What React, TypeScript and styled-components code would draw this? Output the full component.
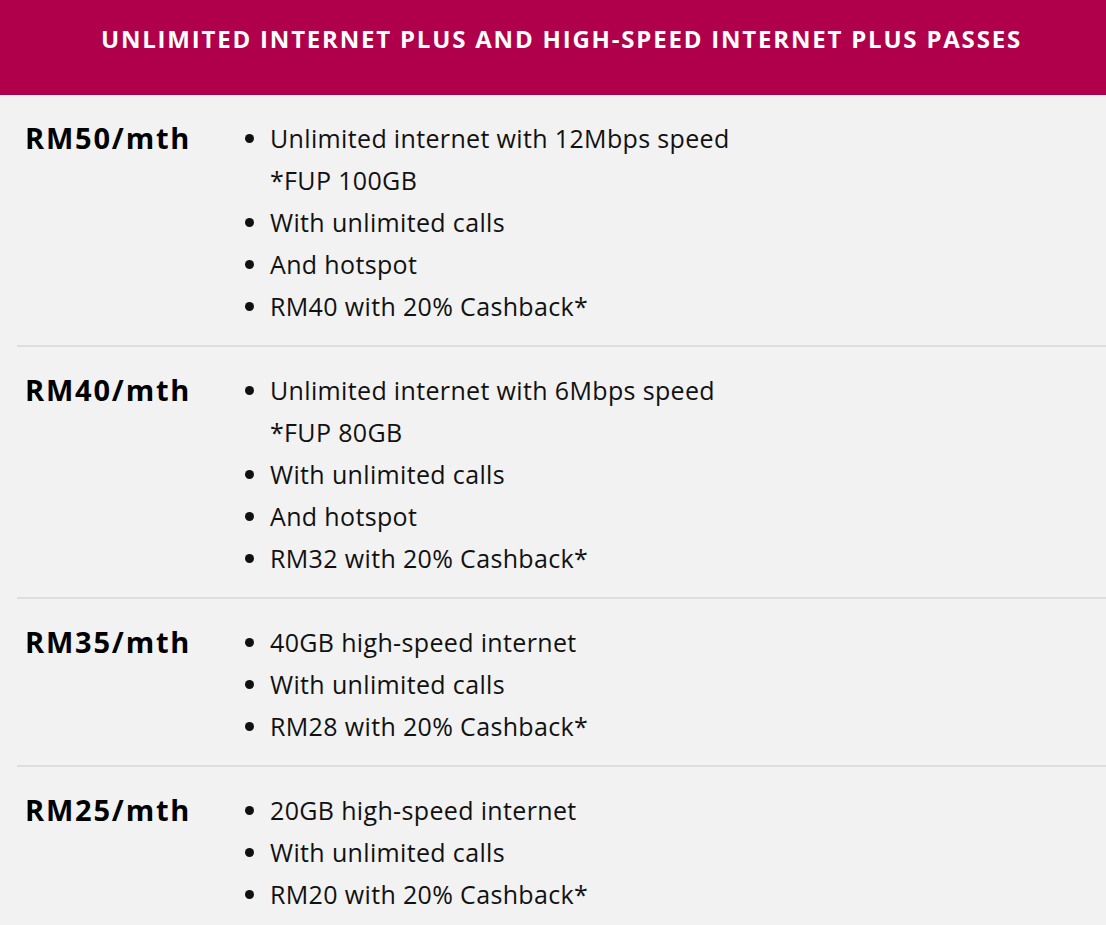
import React from "react";
import styled, { createGlobalStyle } from "styled-components";

type Plan = {
  price: string;
  items: string[][];
};

const plans: Plan[] = [
  {
    price: "RM50/mth",
    items: [
      ["Unlimited internet with 12Mbps speed", "*FUP 100GB"],
      ["With unlimited calls"],
      ["And hotspot"],
      ["RM40 with 20% Cashback*"],
    ],
  },
  {
    price: "RM40/mth",
    items: [
      ["Unlimited internet with 6Mbps speed", "*FUP 80GB"],
      ["With unlimited calls"],
      ["And hotspot"],
      ["RM32 with 20% Cashback*"],
    ],
  },
  {
    price: "RM35/mth",
    items: [
      ["40GB high-speed internet"],
      ["With unlimited calls"],
      ["RM28 with 20% Cashback*"],
    ],
  },
  {
    price: "RM25/mth",
    items: [
      ["20GB high-speed internet"],
      ["With unlimited calls"],
      ["RM20 with 20% Cashback*"],
    ],
  },
];

const App: React.FC = () => {
  return (
    <>
      <GlobalStyle />
      <Page>
        <Header>UNLIMITED INTERNET PLUS AND HIGH-SPEED INTERNET PLUS PASSES</Header>
        <Rows>
          {plans.map((plan) => (
            <Row key={plan.price}>
              <Price>{plan.price}</Price>
              <Features>
                {plan.items.map((lines) => (
                  <Feature key={lines[0]}>
                    {lines.map((line, i) => (
                      <React.Fragment key={line}>
                        {i > 0 && <br />}
                        {line}
                      </React.Fragment>
                    ))}
                  </Feature>
                ))}
              </Features>
            </Row>
          ))}
        </Rows>
      </Page>
    </>
  );
};

export default App;

/* ----- styles ----- */
const GlobalStyle = createGlobalStyle`
  html, body {
    margin: 0;
    padding: 0;
    background: #f2f2f2;
  }
  body {
    font-family: "Open Sans", Lato, sans-serif;
    color: #111;
  }
`;

const Page = styled.div`
  width: 1106px;
  min-height: 925px;
  background: #f2f2f2;
`;

const Header = styled.div`
  height: 95px;
  display: flex;
  align-items: center;
  padding: 0 0 18px 101px;
  box-sizing: border-box;
  background: #b1004b;
  color: #fff;
  font-weight: 700;
  font-size: 24px;
  letter-spacing: 1.8px;
  white-space: nowrap;
`;

const Rows = styled.div`
  display: flex;
  flex-direction: column;
  padding-left: 17px;
`;

const Row = styled.div`
  display: grid;
  grid-template-columns: 228px 1fr;
  padding: 22px 0 18px 8px;
  border-bottom: 2px solid #dedede;

  &:last-child {
    border-bottom: none;
  }
`;

const Price = styled.div`
  font-size: 29px;
  font-weight: 700;
  line-height: 42px;
  letter-spacing: 1.8px;
  color: #000;
`;

const Features = styled.ul`
  margin: 0;
  padding: 0 0 0 17px;
  list-style: disc;
`;

const Feature = styled.li`
  font-size: 25px;
  line-height: 42px;
  letter-spacing: 0.35px;
  color: #111;
`;
